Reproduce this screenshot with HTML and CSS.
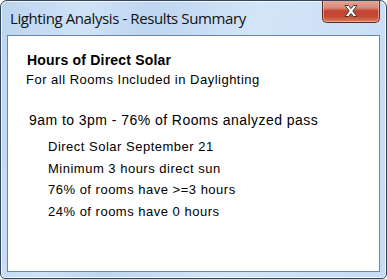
FILE: index.html
```html
<!DOCTYPE html>
<html>
<head>
<meta charset="utf-8">
<link rel="stylesheet" href="styles.css">
</head>
<body>
<div class="window">
  <div class="titlebar">
    <span class="title">Lighting Analysis - Results Summary</span>
    <div class="close" aria-label="Close">
      <svg width="16" height="14" viewBox="0 0 16 14">
        <path d="M2 1.5 L5.5 1.5 L8 4.6 L10.5 1.5 L14 1.5 L9.8 7 L14 12.5 L10.5 12.5 L8 9.4 L5.5 12.5 L2 12.5 L6.2 7 Z" fill="#ffffff" stroke="#3a3a3a" stroke-width="1" stroke-linejoin="round"/>
      </svg>
    </div>
  </div>
  <div class="client">
    <h1 class="heading">Hours of Direct Solar</h1>
    <p class="subheading">For all Rooms Included in Daylighting</p>
    <p class="summary">9am to 3pm - 76% of Rooms analyzed pass</p>
    <ul class="details">
      <li>Direct Solar September 21</li>
      <li>Minimum 3 hours direct sun</li>
      <li>76% of rooms have &gt;=3 hours</li>
      <li>24% of rooms have 0 hours</li>
    </ul>
  </div>
</div>
</body>
</html>
```

FILE: styles.css
```css
html, body {
  margin: 0;
  padding: 0;
  background: #ffffff;
}

.window {
  box-sizing: border-box;
  width: 387px;
  height: 279px;
  border: 1px solid #34465c;
  border-radius: 7px 7px 5px 5px;
  background: linear-gradient(100deg, #bcd5ef 0%, #cfe2f7 20%, #bed6f0 35%, #d3e5f8 60%, #c6dcf4 100%);
  box-shadow: inset 0 0 0 1px rgba(255,255,255,0.75);
  display: flex;
  flex-direction: column;
  padding: 0 6px 6px 6px;
  overflow: hidden;
}

.titlebar {
  height: 34px;
  display: flex;
  align-items: flex-start;
  justify-content: space-between;
}

.title {
  font-family: "Open Sans", "Noto Sans", sans-serif;
  font-size: 15px;
  color: #111111;
  margin-top: 7px;
  margin-left: 3px;
  letter-spacing: -0.4px;
}

.close {
  width: 58px;
  height: 23px;
  margin-top: -1px;
  margin-right: 0;
  box-sizing: border-box;
  border: 1px solid #5b2a24;
  border-top: none;
  border-radius: 0 0 5px 5px;
  background: linear-gradient(#e4a89b 0%, #d98a78 35%, #c3432f 50%, #c54a36 75%, #dd7c5e 100%);
  box-shadow: inset 0 0 0 1px rgba(255,210,200,0.55);
  display: flex;
  align-items: center;
  justify-content: center;
}

.close svg {
  display: block;
}

.client {
  flex: 1;
  background: #ffffff;
  border: 1px solid #6a87a3;
  padding: 14px 0 0 0;
  font-family: "Liberation Sans", Arial, sans-serif;
  color: #000000;
}

.heading {
  margin: 0 0 0 19px;
  font-size: 14px;
  font-weight: bold;
  line-height: 20px;
  letter-spacing: 0.2px;
}

.subheading {
  margin: 0 0 0 18px;
  font-size: 13px;
  line-height: 20px;
  letter-spacing: 0.5px;
}

.summary {
  margin: 20px 0 0 21px;
  font-size: 14px;
  line-height: 20px;
  letter-spacing: 0.45px;
}

.details {
  list-style: none;
  margin: 6px 0 0 40px;
  padding: 0;
  font-size: 13px;
  line-height: 21.67px;
  letter-spacing: 0.5px;
}
```
